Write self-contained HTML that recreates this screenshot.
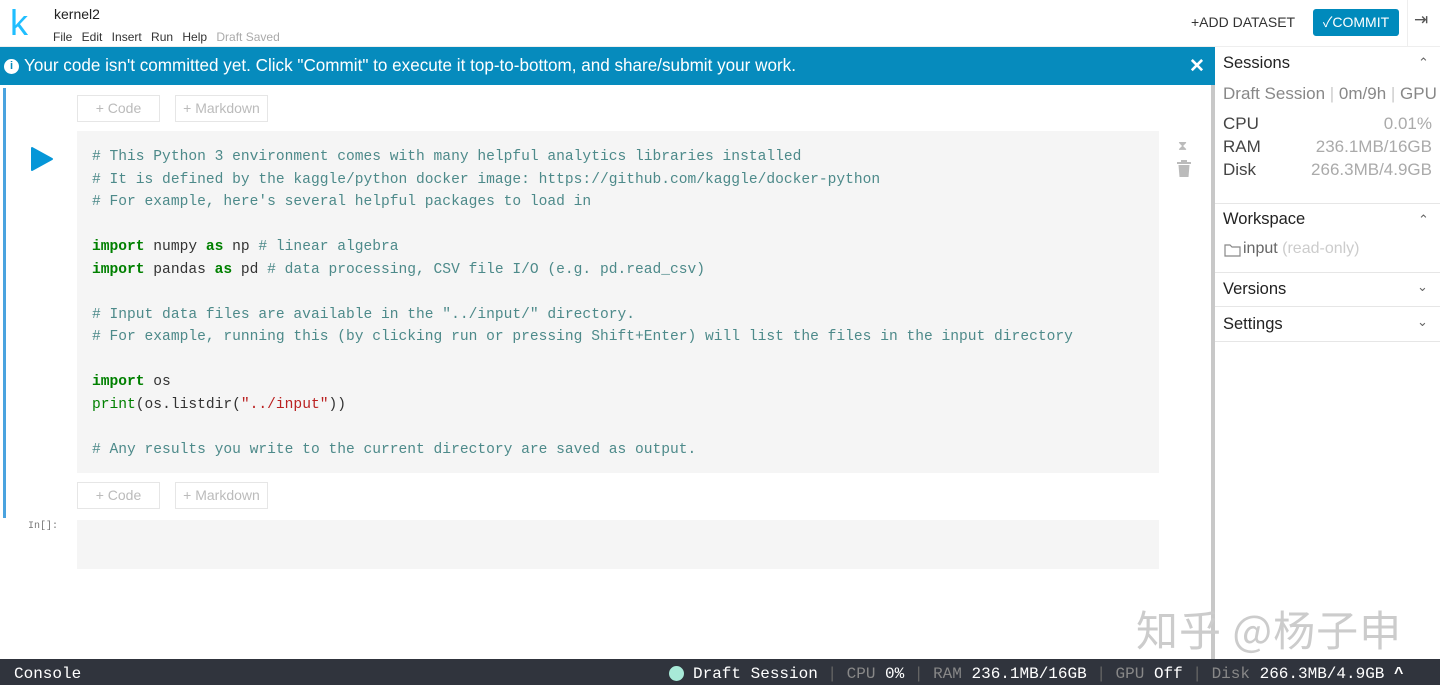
<!DOCTYPE html>
<html><head><meta charset="utf-8"><style>
*{margin:0;padding:0;box-sizing:border-box}
body{width:1440px;height:685px;overflow:hidden;background:#fff;font-family:"Liberation Sans","Noto Sans CJK SC",sans-serif;position:relative;color:#222}
.abs{position:absolute}
.code{font-family:"Liberation Mono",monospace;font-size:14.6px;line-height:22.5px;white-space:pre;color:#333}
.c{color:#4d8a8a}.k{color:#008000;font-weight:bold}.s{color:#ba2121}.b{color:#008000}
.btn{position:absolute;border:1px solid #e6e6e6;color:#bbb;font-size:14px;height:27px;line-height:25px;text-align:center}
.side{font-size:16px}
</style></head><body>
<div class="abs" style="left:10px;top:2px;font-size:36px;color:#20beff;font-family:'Liberation Sans',sans-serif">k</div>
<div class="abs" style="left:54px;top:6px;font-size:14px">kernel2</div>
<div class="abs" style="left:53px;top:30px;font-size:12px;color:#333;word-spacing:6px">File Edit Insert Run Help <span style="color:#aaa;word-spacing:0">Draft Saved</span></div>
<div class="abs" style="left:1191px;top:14px;font-size:14px;color:#333">+ADD DATASET</div>
<div class="abs" style="left:1313px;top:9px;width:86px;height:27px;background:#008abc;border-radius:3px;color:#fff;font-size:14px;line-height:27px;text-align:center">✓COMMIT</div>
<div class="abs" style="left:1407px;top:0;width:1px;height:47px;background:#eee"></div>
<div class="abs" style="left:1414px;top:10px;font-size:17px;color:#555">⇥</div>
<div class="abs" style="left:0;top:46px;width:1440px;height:1px;background:#eee"></div>
<div class="abs" style="left:0;top:47px;width:1215px;height:38px;background:#068bbd"></div>
<div class="abs" style="left:4px;top:59px;width:15px;height:15px;border-radius:50%;background:#fff;color:#068bbd;font-size:11px;font-weight:bold;text-align:center;line-height:15px">i</div>
<div class="abs" style="left:24px;top:56px;font-size:17.1px;color:#fff">Your code isn't committed yet. Click "Commit" to execute it top-to-bottom, and share/submit your work.</div>
<div class="abs" style="left:1189px;top:55px;font-size:19px;color:#fff;font-weight:bold">✕</div>
<div class="abs" style="left:1211px;top:85px;width:4px;height:574px;background:#c8c8c8"></div>
<div class="abs" style="left:3px;top:88px;width:3px;height:430px;background:#4aa3df"></div>
<div class="btn" style="left:77px;top:95px;width:83px">+ Code</div>
<div class="btn" style="left:175px;top:95px;width:93px">+ Markdown</div>
<div class="abs" style="left:77px;top:131px;width:1082px;height:342px;background:#f5f5f5"></div>
<svg class="abs" style="left:30px;top:146px" width="24" height="26"><path d="M2 2 L22 13 L2 24 Z" fill="#0596d8" stroke="#0596d8" stroke-linejoin="round" stroke-width="2"/></svg>
<div class="abs" style="left:1178px;top:138px;color:#bbb;font-size:13px">⧗</div>
<svg class="abs" style="left:1176px;top:160px" width="16" height="18"><rect x="1" y="2" width="14" height="2" fill="#bbb"/><rect x="5" y="0" width="6" height="2" fill="#bbb"/><path d="M2.5 5 H13.5 L12.5 17 H3.5 Z" fill="#bbb"/></svg>
<div class="abs code" style="left:92px;top:146px"><span class="c"># This Python 3 environment comes with many helpful analytics libraries installed
# It is defined by the kaggle/python docker image: https://github.com/kaggle/docker-python
# For example, here's several helpful packages to load in</span>

<span class="k">import</span> numpy <span class="k">as</span> np <span class="c"># linear algebra</span>
<span class="k">import</span> pandas <span class="k">as</span> pd <span class="c"># data processing, CSV file I/O (e.g. pd.read_csv)</span>

<span class="c"># Input data files are available in the "../input/" directory.
# For example, running this (by clicking run or pressing Shift+Enter) will list the files in the input directory</span>

<span class="k">import</span> os
<span class="b">print</span>(os.listdir(<span class="s">"../input"</span>))

<span class="c"># Any results you write to the current directory are saved as output.</span></div>
<div class="btn" style="left:77px;top:482px;width:83px">+ Code</div>
<div class="btn" style="left:175px;top:482px;width:93px">+ Markdown</div>
<div class="abs" style="left:28px;top:521px;font-family:'Liberation Mono',monospace;font-size:10px;color:#777">In[]:</div>
<div class="abs" style="left:77px;top:520px;width:1082px;height:49px;background:#f5f5f5"></div>
<div class="abs" style="left:1136px;top:598px;font-size:42px;color:#ccc;font-family:'Noto Sans CJK SC',sans-serif;letter-spacing:1px">知乎 @杨子申</div>
<!-- sidebar -->
<div class="abs side" style="left:1223px;top:54px;font-size:16.5px">Sessions</div>
<div class="abs" style="left:1418px;top:55px;color:#666;font-size:13px">⌃</div>
<div class="abs" style="left:1223px;top:84px;color:#888;white-space:nowrap;font-size:17px">Draft Session <span style="color:#ccc">|</span> 0m/9h <span style="color:#ccc">|</span> GPU</div>
<div class="abs" style="left:1223px;top:112px;color:#444;line-height:23px;font-size:17px">CPU<br>RAM<br>Disk</div>
<div class="abs" style="left:1240px;top:112px;width:192px;text-align:right;color:#aaa;line-height:23px;font-size:17px">0.01%<br>236.1MB/16GB<br>266.3MB/4.9GB</div>
<div class="abs" style="left:1215px;top:203px;width:225px;height:1px;background:#e6e6e6"></div>
<div class="abs side" style="left:1223px;top:210px;font-size:16.5px">Workspace</div>
<div class="abs" style="left:1418px;top:212px;color:#666;font-size:13px">⌃</div>
<svg class="abs" style="left:1224px;top:243px" width="17" height="14"><path d="M1 2 H6 L8 4 H16 V13 H1 Z" fill="none" stroke="#888" stroke-width="1.2"/></svg>
<div class="abs side" style="left:1243px;top:240px;color:#666">input <span style="color:#ccc">(read-only)</span></div>
<div class="abs" style="left:1215px;top:272px;width:225px;height:1px;background:#e6e6e6"></div>
<div class="abs side" style="left:1223px;top:280px;font-size:16.5px">Versions</div>
<div class="abs" style="left:1417px;top:279px;color:#666;font-size:13px">⌄</div>
<div class="abs" style="left:1215px;top:306px;width:225px;height:1px;background:#e6e6e6"></div>
<div class="abs side" style="left:1223px;top:315px;font-size:16.5px">Settings</div>
<div class="abs" style="left:1417px;top:314px;color:#666;font-size:13px">⌄</div>
<div class="abs" style="left:1215px;top:341px;width:225px;height:1px;background:#e6e6e6"></div>
<!-- bottom bar -->
<div class="abs" style="left:0;top:659px;width:1440px;height:26px;background:#30343d;font-family:'Liberation Mono',monospace;font-size:16px;color:#fff;white-space:nowrap">
<span class="abs" style="left:14px;top:6px">Console</span>
<span class="abs" style="left:669px;top:7px;width:15px;height:15px;border-radius:50%;background:#a8ead8"></span>
<span class="abs" style="left:693px;top:6px">Draft Session <span style="color:#666">|</span> <span style="color:#888">CPU</span> 0% <span style="color:#666">|</span> <span style="color:#888">RAM</span> 236.1MB/16GB <span style="color:#666">|</span> <span style="color:#888">GPU</span> Off <span style="color:#666">|</span> <span style="color:#888">Disk</span> 266.3MB/4.9GB <b>^</b></span>
</div>
</body></html>
